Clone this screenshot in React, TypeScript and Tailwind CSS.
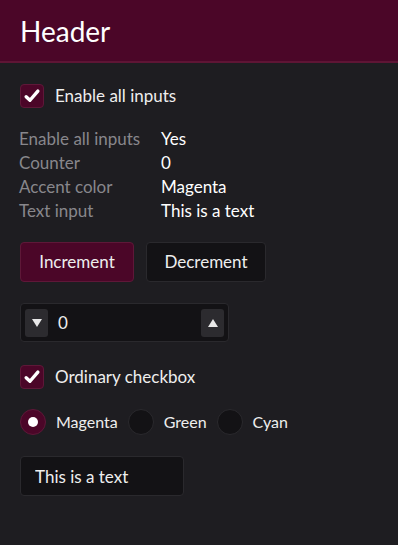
import { useState } from 'react';

function CheckBox({ checked, onChange, label }: { checked: boolean; onChange: () => void; label: string }) {
  return (
    <label className="flex items-center gap-[11px] cursor-pointer select-none">
      <span
        onClick={onChange}
        className="w-6 h-6 rounded-[4px] bg-[#4b0628] border border-[#5e1838] flex items-center justify-center"
      >
        {checked && (
          <svg width="18" height="18" viewBox="0 0 16 16">
            <path d="M2.8 8.6 L6.2 11.8 L13.2 3.6" fill="none" stroke="#fff" strokeWidth="3" strokeLinecap="round" strokeLinejoin="round" />
          </svg>
        )}
      </span>
      <span className="text-[17px] leading-6 text-[#eeeeee]">{label}</span>
    </label>
  );
}

function Radio({ selected, label, onSelect }: { selected: boolean; label: string; onSelect: () => void }) {
  return (
    <label onClick={onSelect} className="flex items-center gap-[10px] cursor-pointer">
      <span
        className={
          selected
            ? 'w-[26px] h-[26px] rounded-full bg-[#4b0628] border border-[#5e1838] flex items-center justify-center'
            : 'w-[26px] h-[26px] rounded-full bg-[#131215] border border-[#2a292d]'
        }
      >
        {selected && <span className="w-[10px] h-[10px] rounded-full bg-white" />}
      </span>
      <span className="text-[16px] leading-6 text-[#eeeeee]">{label}</span>
    </label>
  );
}

export default function App() {
  const [enabled, setEnabled] = useState(true);
  const [ordinary, setOrdinary] = useState(true);
  const [counter, setCounter] = useState(0);
  const [accent, setAccent] = useState('Magenta');
  const [text, setText] = useState('This is a text');

  const rows = [
    ['Enable all inputs', enabled ? 'Yes' : 'No'],
    ['Counter', String(counter)],
    ['Accent color', accent],
    ['Text input', text],
  ];

  return (
    <div className="min-h-[545px] bg-[#1e1d21] text-[#eeeeee]" style={{ fontFamily: 'Lato, "Noto Sans", sans-serif' }}>
      <div className="h-[63px] bg-[#4b0628] border-b-2 border-[#5e1535] flex items-center px-5">
        <h1 className="text-[28px] leading-none text-white">Header</h1>
      </div>

      <div className="px-5 pt-[21px]">
        <CheckBox checked={enabled} onChange={() => setEnabled(!enabled)} label="Enable all inputs" />

        <div className="mt-[19px] grid grid-cols-[142px_1fr] text-[17px] leading-[24px] -ml-px">
          {rows.map(([k, v]) => (
            <div key={k} className="contents">
              <span className="text-[#88878c]">{k}</span>
              <span className="text-white">{v}</span>
            </div>
          ))}
        </div>

        <div className="mt-[19px] flex gap-3">
          <button
            onClick={() => setCounter(counter + 1)}
            className="h-10 w-[114px] rounded-[4px] bg-[#4b0628] border border-[#5e1838] text-[17px] leading-6 text-[#eeeeee]"
          >
            Increment
          </button>
          <button
            onClick={() => setCounter(counter - 1)}
            className="h-10 w-[120px] rounded-[4px] bg-[#131215] border border-[#2a292d] text-[17px] leading-6 text-[#eeeeee]"
          >
            Decrement
          </button>
        </div>

        <div className="mt-[21px] w-[209px] h-[39px] rounded-[4px] bg-[#131215] border border-[#2a292d] flex items-center px-1">
          <button onClick={() => setCounter(counter - 1)} className="w-[23px] h-[28px] rounded-[3px] bg-[#2c2b2f] flex items-center justify-center">
            <svg width="12" height="10" viewBox="0 0 12 10">
              <path d="M1 1 L11 1 L6 9 Z" fill="#e8e8e8" />
            </svg>
          </button>
          <span className="flex-1 pl-[10px] text-[17px] leading-6">{counter}</span>
          <button onClick={() => setCounter(counter + 1)} className="w-[23px] h-[28px] rounded-[3px] bg-[#2c2b2f] flex items-center justify-center">
            <svg width="12" height="10" viewBox="0 0 12 10">
              <path d="M1 9 L11 9 L6 1 Z" fill="#e8e8e8" />
            </svg>
          </button>
        </div>

        <div className="mt-[23px]">
          <CheckBox checked={ordinary} onChange={() => setOrdinary(!ordinary)} label="Ordinary checkbox" />
        </div>

        <div className="mt-5 flex items-center gap-[10px]">
          {['Magenta', 'Green', 'Cyan'].map((c) => (
            <Radio key={c} label={c} selected={accent === c} onSelect={() => setAccent(c)} />
          ))}
        </div>

        <input
          value={text}
          onChange={(e) => setText(e.target.value)}
          className="mt-[21px] block w-[164px] h-10 rounded-[4px] bg-[#131215] border border-[#2a292d] px-[14px] text-[17px] leading-6 text-[#eeeeee] outline-none"
        />
      </div>
    </div>
  );
}
